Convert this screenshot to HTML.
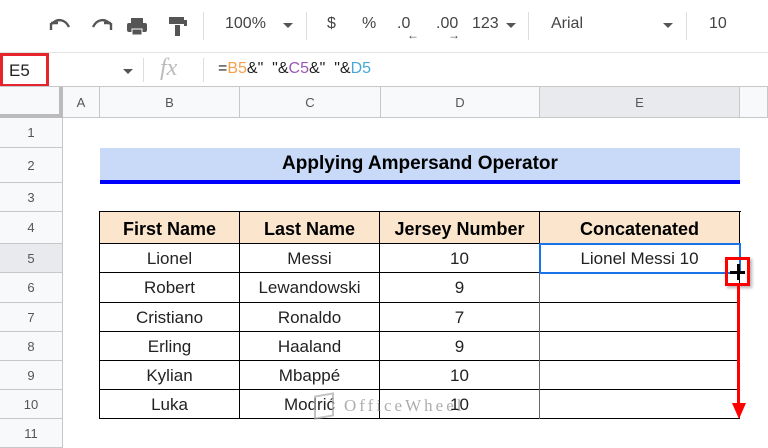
<!DOCTYPE html>
<html><head><meta charset="utf-8"><style>
*{margin:0;padding:0;box-sizing:border-box}
body{width:768px;height:448px;overflow:hidden;background:#fff;font-family:"Liberation Sans",Arial,sans-serif;position:relative;color:#000}
.a{position:absolute}
.tb{font-size:16px;color:#444;top:15px}
.ch{position:absolute;top:87px;height:31px;background:#f8f9fa;border-right:1px solid #c7c7c7;border-bottom:1px solid #c7c7c7;font-size:13px;color:#555;text-align:center;line-height:31px}
.rh{position:absolute;left:0;width:63px;background:#f8f9fa;border-bottom:1px solid #c7c7c7;border-right:1px solid #c7c7c7;font-size:13px;color:#555;text-align:center}
.c{position:absolute;border-right:1px solid #000;border-bottom:1px solid #000;text-align:center;font-size:17px;color:#222}
.h{background:#fce5cd;font-weight:bold;font-size:18px;color:#000;padding-top:2px}
</style></head><body>
<svg class="a" style="left:45px;top:12px" width="160" height="26" viewBox="0 0 160 26">
<path d="M6 11 L6 18 M6 11 L13 11" stroke="#555" stroke-width="2.4" fill="none"/><path d="M7 12 C12 6 20 7 24 15" stroke="#555" stroke-width="2.4" fill="none"/>
<path d="M66 11 L66 18 M66 11 L59 11" stroke="#555" stroke-width="2.4" fill="none"/><path d="M65 12 C60 6 52 7 48 15" stroke="#555" stroke-width="2.4" fill="none"/>
<rect x="86" y="6" width="12" height="5" fill="#555"/><rect x="82" y="11" width="20" height="9" rx="2" fill="#555"/><rect x="87" y="17" width="10" height="6" fill="#555" stroke="#fff" stroke-width="1"/>
<rect x="124" y="5" width="15" height="7" fill="#555"/><rect x="139" y="8" width="3" height="6" fill="#555"/><rect x="130" y="13" width="5" height="11" fill="#555"/>
</svg>
<div class="a" style="left:203px;top:12px;width:1px;height:28px;background:#ddd"></div>
<div class="a tb" style="left:225px">100%</div>
<div class="a" style="left:283px;top:23px;border:5px solid transparent;border-top:5px solid #555"></div>
<div class="a" style="left:306px;top:12px;width:1px;height:28px;background:#ddd"></div>
<div class="a tb" style="left:327px">$</div>
<div class="a tb" style="left:362px">%</div>
<div class="a tb" style="left:397px">.0</div>
<div class="a tb" style="left:436px">.00</div>
<div class="a" style="left:407px;top:31px;font-size:12px;color:#444;line-height:8px">←</div>
<div class="a" style="left:448px;top:31px;font-size:12px;color:#444;line-height:8px">→</div>
<div class="a tb" style="left:472px">123</div>
<div class="a" style="left:506px;top:23px;border:5px solid transparent;border-top:5px solid #555"></div>
<div class="a" style="left:528px;top:12px;width:1px;height:28px;background:#ddd"></div>
<div class="a tb" style="left:551px">Arial</div>
<div class="a" style="left:663px;top:23px;border:5px solid transparent;border-top:5px solid #555"></div>
<div class="a" style="left:686px;top:12px;width:1px;height:28px;background:#ddd"></div>
<div class="a tb" style="left:709px">10</div>
<div class="a" style="left:0;top:52px;width:768px;height:1px;background:#e3e3e3"></div>
<div class="a" style="left:0;top:53px;width:49px;height:34px;border:3px solid #e5242b;font-size:17px;padding:5px 0 0 6px;color:#222">E5</div>
<div class="a" style="left:123px;top:69px;border:5px solid transparent;border-top:5px solid #555"></div>
<div class="a" style="left:143px;top:58px;width:1px;height:24px;background:#ddd"></div>
<div class="a" style="left:160px;top:55px;font-family:'Liberation Serif',serif;font-style:italic;font-size:24px;color:#bbb">fx</div>
<div class="a" style="left:203px;top:58px;width:1px;height:24px;background:#ddd"></div>
<div class="a" style="left:218px;top:60px;font-size:16px;color:#222;white-space:pre">=<span style="color:#f6a04d">B5</span>&amp;"  "&amp;<span style="color:#9b59b6">C5</span>&amp;"  "&amp;<span style="color:#46a8d8">D5</span></div>
<div class="a" style="left:0;top:86px;width:768px;height:1px;background:#c7c7c7"></div>
<div class="ch" style="left:0;width:63px;border-right:4px solid #bbb;border-bottom:4px solid #bbb"></div>
<div class="ch" style="left:63px;width:37px">A</div>
<div class="ch" style="left:100px;width:140px">B</div>
<div class="ch" style="left:240px;width:141px">C</div>
<div class="ch" style="left:381px;width:159px">D</div>
<div class="ch" style="left:540px;width:200px;background:#e8eaed">E</div>
<div class="ch" style="left:740px;width:28px"></div>
<div class="rh" style="top:118px;height:30px;line-height:30px">1</div>
<div class="rh" style="top:148px;height:35px;line-height:35px">2</div>
<div class="rh" style="top:183px;height:29px;line-height:29px">3</div>
<div class="rh" style="top:212px;height:32px;line-height:32px">4</div>
<div class="rh" style="top:244px;height:29px;line-height:29px;background:#e8eaed">5</div>
<div class="rh" style="top:273px;height:30px;line-height:30px">6</div>
<div class="rh" style="top:303px;height:29px;line-height:29px">7</div>
<div class="rh" style="top:332px;height:29px;line-height:29px">8</div>
<div class="rh" style="top:361px;height:29px;line-height:29px">9</div>
<div class="rh" style="top:390px;height:29px;line-height:29px">10</div>
<div class="rh" style="top:419px;height:29px;line-height:29px">11</div>
<div class="a" style="left:100px;top:148px;width:640px;height:32px;background:#c9daf8;text-align:center;font-weight:bold;font-size:19px;line-height:32px">Applying Ampersand Operator</div>
<div class="a" style="left:100px;top:180px;width:640px;height:4px;background:#0000ff"></div>
<div class="a" style="left:99px;top:211px;width:642px;height:208px;border-left:1px solid #000;border-top:1px solid #000"></div>
<div class="c h" style="left:100px;top:212px;width:140px;height:32px;line-height:30px">First Name</div>
<div class="c h" style="left:240px;top:212px;width:140px;height:32px;line-height:30px">Last Name</div>
<div class="c h" style="left:380px;top:212px;width:160px;height:32px;line-height:30px">Jersey Number</div>
<div class="c h" style="left:540px;top:212px;width:200px;height:32px;line-height:30px">Concatenated</div>

<div class="c" style="left:100px;top:244px;width:140px;height:29px;line-height:29px">Lionel</div>
<div class="c" style="left:240px;top:244px;width:140px;height:29px;line-height:29px">Messi</div>
<div class="c" style="left:380px;top:244px;width:160px;height:29px;line-height:29px">10</div>
<div class="c" style="left:540px;top:244px;width:200px;height:29px;line-height:29px">Lionel Messi 10</div>

<div class="c" style="left:100px;top:273px;width:140px;height:30px;line-height:30px">Robert</div>
<div class="c" style="left:240px;top:273px;width:140px;height:30px;line-height:30px">Lewandowski</div>
<div class="c" style="left:380px;top:273px;width:160px;height:30px;line-height:30px">9</div>
<div class="c" style="left:540px;top:273px;width:200px;height:30px"></div>

<div class="c" style="left:100px;top:303px;width:140px;height:29px;line-height:29px">Cristiano</div>
<div class="c" style="left:240px;top:303px;width:140px;height:29px;line-height:29px">Ronaldo</div>
<div class="c" style="left:380px;top:303px;width:160px;height:29px;line-height:29px">7</div>
<div class="c" style="left:540px;top:303px;width:200px;height:29px"></div>

<div class="c" style="left:100px;top:332px;width:140px;height:29px;line-height:29px">Erling</div>
<div class="c" style="left:240px;top:332px;width:140px;height:29px;line-height:29px">Haaland</div>
<div class="c" style="left:380px;top:332px;width:160px;height:29px;line-height:29px">9</div>
<div class="c" style="left:540px;top:332px;width:200px;height:29px"></div>

<div class="c" style="left:100px;top:361px;width:140px;height:29px;line-height:29px">Kylian</div>
<div class="c" style="left:240px;top:361px;width:140px;height:29px;line-height:29px">Mbappé</div>
<div class="c" style="left:380px;top:361px;width:160px;height:29px;line-height:29px">10</div>
<div class="c" style="left:540px;top:361px;width:200px;height:29px"></div>

<div class="c" style="left:100px;top:390px;width:140px;height:29px;line-height:29px">Luka</div>
<div class="c" style="left:240px;top:390px;width:140px;height:29px;line-height:29px">Modrić</div>
<div class="c" style="left:380px;top:390px;width:160px;height:29px;line-height:29px">10</div>
<div class="c" style="left:540px;top:390px;width:200px;height:29px"></div>
<div class="a" style="left:539px;top:244px;width:1px;height:175px;background:#666"></div>
<div class="a" style="left:314px;top:394px;width:20px;height:24px;border:2px solid #aaa;opacity:.7;transform:skewY(-10deg)"></div>
<div class="a" style="left:344px;top:396px;font-family:'Liberation Serif',serif;font-size:17px;color:#999;letter-spacing:3px;opacity:.8">OfficeWheel</div>
<div class="a" style="left:539px;top:243px;width:202px;height:31px;border:2px solid #1a73e8"></div>
<div class="a" style="left:725px;top:257px;width:25px;height:29px;border:3px solid #ff0000;box-shadow:2px 2px 3px rgba(0,0,0,.3)"></div>
<div class="a" style="left:730px;top:271px;width:15px;height:3px;background:#000"></div>
<div class="a" style="left:737px;top:264px;width:3px;height:16px;background:#000"></div>
<div class="a" style="left:737px;top:286px;width:3px;height:120px;background:#ff0000"></div>
<div class="a" style="left:732px;top:403px;border-left:7px solid transparent;border-right:7px solid transparent;border-top:16px solid #ff0000"></div>
</body></html>
